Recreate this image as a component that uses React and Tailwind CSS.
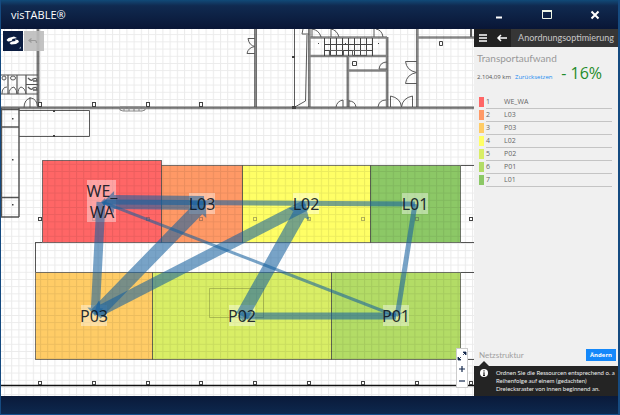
import React, { useState } from 'react';

const resources = [
  { id: 1, name: 'WE_WA', color: '#ff6666' },
  { id: 2, name: 'L03', color: '#ff9966' },
  { id: 3, name: 'P03', color: '#ffcc66' },
  { id: 4, name: 'L02', color: '#ffff66' },
  { id: 5, name: 'P02', color: '#d9ee66' },
  { id: 6, name: 'P01', color: '#b3dc66' },
  { id: 7, name: 'L01', color: '#8cc866' }
];

const areas = [
  { name: 'WE_WA', x: 42, y: 160, w: 119, h: 82, color: '#ff6666' },
  { name: 'L03', x: 161, y: 165, w: 81, h: 77, color: '#ff9966' },
  { name: 'L02', x: 242, y: 165, w: 128, h: 77, color: '#ffff66' },
  { name: 'L01', x: 370, y: 165, w: 90, h: 77, color: '#8cc866' },
  { name: 'P03', x: 35, y: 272, w: 117, h: 87, color: '#ffcc66' },
  { name: 'P02', x: 152, y: 272, w: 179, h: 87, color: '#d9ee66' },
  { name: 'P01', x: 331, y: 272, w: 129, h: 87, color: '#b3dc66' }
];

const labels = [
  { text: 'L03', x: 202, y: 204 },
  { text: 'L02', x: 306, y: 204 },
  { text: 'L01', x: 415, y: 204 },
  { text: 'P03', x: 94, y: 316 },
  { text: 'P02', x: 242, y: 316 },
  { text: 'P01', x: 396, y: 316 }
];

// material flows, width follows the transport intensity
const flows = [
  { from: [204, 203], to: [103, 202], width: 14, head: 11 },
  { from: [415, 204], to: [101, 202], width: 5, head: 4 },
  { from: [101, 202], to: [95, 316], width: 9, head: 8 },
  { from: [96, 314], to: [206, 201], width: 13, head: 12 },
  { from: [306, 205], to: [94, 314], width: 11, head: 10 },
  { from: [242, 316], to: [305, 204], width: 13, head: 12 },
  { from: [396, 316], to: [238, 316], width: 7, head: 6 },
  { from: [396, 316], to: [102, 202], width: 3, head: 4 },
  { from: [415, 204], to: [397, 317], width: 5, head: 5 }
];

const columns = [40, 94, 148, 201, 255, 309, 363, 417, 471];

const flowPoints = ({ from, to, width, head }) => {
  const dx = to[0] - from[0];
  const dy = to[1] - from[1];
  const len = Math.hypot(dx, dy);
  const ux = dx / len;
  const uy = dy / len;
  const at = (along, side) =>
    `${from[0] + ux * along - uy * side},${from[1] + uy * along + ux * side}`;
  const half = width / 2;
  return [
    at(0, half),
    at(len - head, half),
    at(len - head, head),
    at(len, 0),
    at(len - head, -head),
    at(len - head, -half),
    at(0, -half)
  ].join(' ');
};

const Walls = () => (
  <g fill="none" stroke="#5c5c5c" strokeWidth="1">
    <g stroke="#888" strokeWidth="2.4">
      <path d="M1 108H474M38 29V106M255.500 29V108M309.500 29V108M310 37.500H387M310 56H387M348 56V108M348 70.500H387M387 37V108M417.500 29V108M417 37.500H474" />
    </g>
    <path d="M37 29V106M39 29V106M1 107H474M254.500 29V107M256.500 29V107M308.500 29V107M416.500 29V107M388 37V107M347 56V107" stroke="#444" strokeWidth="0.5" />
    <path d="M1 75H38M1 94H38M8 75V94M17 75V94M26 75V94M26 84.500H38" stroke="#555" strokeWidth="1.200" />
    <path d="M2 94q0 -7 5 -7M9 94q0 -6 5 -7q3 3 3 7M18 94q0 -6 3 -7q4 1 5 7M30 97V108M24 108q0 -9 7 -10M38 108q-1 -9 -7 -10" />
    <ellipse cx="4" cy="78" rx="2" ry="2" />
    <ellipse cx="13" cy="78" rx="2.500" ry="2" />
    <path d="M28 78q4 4 5 1q4 -2 4 2h-4M28 87q4 4 5 1q4 -2 4 2h-4" strokeWidth="1.300" />
    <path d="M19 110.500H89.500V136.500H19" />
    <path d="M1.500 108V217M19 108V217M1 109.500H19M1 127H19M1 197.500H19M1 217H19" stroke="#555" strokeWidth="1.400" />
    <path d="M120 107h25v3l-3 1h-19l-3 -1zM124 107v4M129 107v4M134 107v4M139 107v4" stroke="#888" />
    <path d="M255 38.500h-7q1 7 7 8q-7 1 -8 7h8" />
    <path d="M294.500 29V108M307 35L305.500 101L294 107.500M303 29l-1 5h7M312 29v8" />
    <path d="M312 29q7 1 9 8M331 29v8M331 29q6 1 8 8M374 29v8M376 29q6 1 7 8" />
    <path d="M324.500 38V56M330.500 38V56M336.500 38V56M342.500 38V56M348.500 38V56M354.500 38V56M360.500 38V56M366.500 38V56M372.500 38V56M324 44.500H372M324 50.500H372" stroke="#444" />
    <path d="M329.500 50.500h14v5h-14zM352.500 50.500h14v5h-14z" />
    <path d="M352.500 61.500h4v4h-4zM439.500 41.500h3v4h-3z" stroke="#444" />
    <path d="M387 62q-7 0 -8 7h8M343 107v-7q-6 1 -7 7M349 100v7M349 101q6 0 7 6M386 100q-7 0 -8 7" />
    <path d="M390.500 107V96q10 2 11 11M412.500 107V96q-10 2 -11 11" />
    <path d="M417 61.500H405.500q1 9 11 11q-10 2 -11 11H417" />
    <path d="M471 29V37" strokeWidth="2" />
    <path d="M461 165.500H474M461 242.500H474M35.500 242.500H42M35.500 242V272M461 272.500H474M461 359.500H474" stroke="#555" />
    <path d="M1 385.500H474" stroke="#111" strokeWidth="1.500" />
    <g fill="#444" stroke="none">
      <path d="M12 118h1.500v1.500H12zM12 159h1.500v1.500H12zM12 204h1.500v1.500H12zM53 110h2v2h-2zM53 135h2v2h-2zM292 56h3v2h-3zM318 43h1v1h-1zM378 43h1v1h-1zM345 43h1v1h-1zM292 106h4v3h-4z" />
    </g>
  </g>
);

const FloorPlan = () => (
  <svg
    className="block h-full w-full bg-white"
    viewBox="1 29 473 367"
    preserveAspectRatio="xMinYMin slice"
    role="img"
    aria-label="Layout"
  >
    <defs>
      <pattern id="grid" x="40" y="27" width="7.200" height="7.200" patternUnits="userSpaceOnUse">
        <path d="M0 0.500H7.200M0.500 0V7.200" stroke="#000" strokeOpacity="0.080" strokeWidth="1" fill="none" />
      </pattern>
    </defs>
    <Walls />
    {areas.map((area) => (
      <rect
        key={area.name}
        x={area.x + 0.5}
        y={area.y + 0.5}
        width={area.w}
        height={area.h}
        fill={area.color}
        stroke="#444"
        strokeOpacity="0.7"
      />
    ))}
    <rect x="1" y="29" width="700" height="600" fill="url(#grid)" />
    <path d="M209.500 288.500h54v29h-54z" fill="none" stroke="#7d8a3a" strokeOpacity="0.5" />
    <g fill="#fff" stroke="#444" strokeWidth="1">
      {columns.slice(0, 4).map((x) => (
        <rect key={x} x={x - 1.5} y="102.500" width="3" height="4" />
      ))}
      {columns.map((x) => (
        <rect key={x} x={x - 1.5} y="217.500" width="3" height="3" fill="none" opacity={x > 40 && x < 471 ? 0.4 : 1} />
      ))}
      {columns.map((x) => (
        <rect key={x} x={x - 1.5} y="381.500" width="3" height="3" />
      ))}
    </g>
    <g fill="#fff" fillOpacity="0.400">
      <rect x="87" y="180" width="29" height="42" />
      {labels.map((label) => (
        <rect key={label.text} x={label.x - 13} y={label.y - 11} width="26" height="21" />
      ))}
    </g>
    <g fill="#16609f" fillOpacity="0.580">
      {flows.map((flow, i) => (
        <polygon key={i} points={flowPoints(flow)} />
      ))}
    </g>
    <g fontFamily='"Noto Sans", sans-serif' fontSize="16" fill="#0c1420" fillOpacity="0.9" textAnchor="middle">
      <text x="102" y="197">WE_</text>
      <text x="102" y="218">WA</text>
      {labels.map((label) => (
        <text key={label.text} x={label.x} y={label.y + 6}>
          {label.text}
        </text>
      ))}
    </g>
  </svg>
);

const App = () => {
  const [selected, setSelected] = useState(null);

  return (
    <div className="flex min-h-screen flex-col border-r-2 border-l border-[#154a80] bg-[#0a1c3f] font-['Open_Sans','Noto_Sans',sans-serif]">
      <header className="flex h-[29px] shrink-0 items-center bg-linear-to-b from-[#104a78] from-0% via-[#102a50] via-20% to-[#091636] pl-2.5 text-white">
        <h1 className="text-[11px] leading-none">visTABLE®</h1>
        <div className="ml-auto flex items-center gap-7 pr-[13px]">
          <button type="button" aria-label="Minimize" className="flex h-5 w-5 items-center justify-center">
            <svg width="10" height="10" viewBox="0 0 10 10">
              <path d="M2 7.500H8" stroke="#fff" strokeWidth="2" />
            </svg>
          </button>
          <button type="button" aria-label="Maximize" className="flex h-5 w-5 items-center justify-center">
            <svg width="10" height="10" viewBox="0 0 10 10">
              <path d="M0.500 1.500H9.500V8.500H0.500Z" stroke="#eef5e6" strokeWidth="1" fill="none" />
              <path d="M0 1H10" stroke="#eef5e6" strokeWidth="2" />
            </svg>
          </button>
          <button type="button" aria-label="Close" className="flex h-5 w-5 items-center justify-center">
            <svg width="10" height="10" viewBox="0 0 10 10">
              <path d="M1.500 1.500L8.500 8.500M8.500 1.500L1.500 8.500" stroke="#fff" strokeWidth="2" />
            </svg>
          </button>
        </div>
      </header>

      <div className="flex flex-1">
        <main className="relative min-w-0 flex-1">
          <div className="absolute inset-0">
            <FloorPlan />
          </div>
          <div className="absolute top-0.5 left-0.5 flex gap-px">
            <button type="button" aria-label="Move objects" className="h-5 w-5 bg-[#0a1c40]">
              <svg width="20" height="20" viewBox="0 0 20 20">
                <path d="M3.500 9L5.500 7L11 5.500L14 7L9.500 8L8.500 10L5 10.500Z" fill="#fff" />
                <path d="M6.500 12L9 10.500L12.500 10L12 8.500L15 9L16 11L13 13L8 13.500Z" fill="#fff" />
                <path d="M18 15.500v2h-2z" fill="#9ab" />
              </svg>
            </button>
            <button type="button" aria-label="Undo" className="h-5 w-5 bg-[#bdbdbd]/90">
              <svg width="20" height="20" viewBox="0 0 20 20">
                <path d="M5 9.500H11Q12.500 9.500 12.500 12M7.500 7.500L5 9.500L7.500 11.500" fill="none" stroke="#999" strokeWidth="1.200" />
              </svg>
            </button>
          </div>
          <div className="absolute right-1.5 bottom-2 flex w-3 flex-col border border-[#ccc] bg-white">
            <button type="button" aria-label="Fit to view" className="flex h-[13px] items-center justify-center">
              <svg width="10" height="10" viewBox="0 0 10 10">
                <path d="M6 1H9V4ZM1 6V9H4ZM8 2L6 4M2 8L4 6" fill="#14284c" stroke="#14284c" strokeWidth="0.800" />
              </svg>
            </button>
            <button type="button" aria-label="Zoom in" className="flex h-[13px] items-center justify-center">
              <svg width="8" height="8" viewBox="0 0 8 8">
                <path d="M1 4H7M4 1V7" stroke="#14284c" strokeWidth="1.200" />
              </svg>
            </button>
            <button type="button" aria-label="Zoom out" className="flex h-3 items-center justify-center">
              <svg width="8" height="8" viewBox="0 0 8 8">
                <path d="M1 4H7" stroke="#14284c" strokeWidth="1.200" />
              </svg>
            </button>
          </div>
        </main>

        <aside className="flex w-36 shrink-0 flex-col bg-[#f0f0f0]">
          <div className="flex h-[18px] bg-[#363636]">
            <button type="button" aria-label="Menu" className="flex w-[18px] items-center justify-center bg-[#222]">
              <svg width="10" height="10" viewBox="0 0 10 10">
                <path d="M1 2H9M1 5H9M1 8H9" stroke="#fff" strokeWidth="1.400" />
              </svg>
            </button>
            <button type="button" aria-label="Back" className="flex w-[19px] items-center justify-center bg-[#222]">
              <svg width="12" height="10" viewBox="0 0 12 10">
                <path d="M11 5H2M5 2L2 5L5 8" stroke="#fff" strokeWidth="1.500" fill="none" />
              </svg>
            </button>
            <h2 className="flex-1 pr-1 text-right font-['Lato',sans-serif] text-[9px] leading-[18px] whitespace-nowrap text-[#c8c8c8]">
              Anordnungsoptimierung
            </h2>
          </div>

          <section className="pt-1 pr-4 pl-[3px]">
            <h3 className="font-['Lato',sans-serif] text-[10px] leading-[14px] text-[#999]">Transportaufwand</h3>
            <div className="flex h-6 items-center gap-1">
              <span className="text-[6px] whitespace-nowrap text-[#555]">2.104,09 km</span>
              <a href="#reset" className="text-[6px] text-[#1a8cf0]">
                Zurücksetzen
              </a>
              <span className="ml-auto pb-2 text-base leading-none whitespace-nowrap text-[#1f8c2a]">- 16%</span>
            </div>
          </section>

          <table className="mt-[7px] mr-1.5 ml-[5px] border-collapse text-left text-[7px] leading-3 text-[#666]">
            <tbody>
              {resources.map((item) => (
                <tr
                  key={item.id}
                  className={selected === item.id ? 'bg-white' : ''}
                  onClick={() => setSelected(item.id)}
                >
                  <td className="w-[7px] p-0">
                    <div className="h-2.5 w-[5px]" style={{ backgroundColor: item.color }} />
                  </td>
                  <td className="w-[18px] border-b border-[#c4c4c4] p-0">{item.id}</td>
                  <td className="border-b border-[#c4c4c4] p-0">{item.name}</td>
                </tr>
              ))}
            </tbody>
          </table>

          <div className="mt-auto flex items-center justify-between pr-0.5 pb-[5px] pl-[5px]">
            <span className="font-['Lato',sans-serif] text-[8px] leading-3 text-[#a0a0a0]">Netzstruktur</span>
            <button type="button" className="h-3 w-[30px] bg-[#1488fa] text-center text-[6px] leading-3 font-bold text-white">
              Ändern
            </button>
          </div>
          <div className="relative flex gap-2 bg-[#242424] py-[3px] pl-1.5 text-white">
            <svg className="absolute -top-[5px] left-1" width="12" height="6" viewBox="0 0 12 6">
              <path d="M0 6L6 0L12 6Z" fill="#242424" />
            </svg>
            <svg className="shrink-0" width="8" height="8" viewBox="0 0 8 8">
              <circle cx="4" cy="4" r="4" fill="#fff" />
              <path d="M4 1.300V2.500M4 3.200V6.700M3 6.500H5" stroke="#222" strokeWidth="1.200" />
            </svg>
            <p className="font-['Lato',sans-serif] text-[6px] leading-2 whitespace-nowrap text-[#eee]">
              Ordnen Sie die Ressourcen entsprechend o. a
              <br />
              Reihenfolge auf einem (gedachten)
              <br />
              Dreiecksraster von innen beginnend an.
            </p>
          </div>
        </aside>
      </div>

      <footer className="h-[19px] shrink-0 border-b border-[#14508c] bg-linear-to-b from-[#0a1a3a] to-[#0c284e]" />
    </div>
  );
};

export default App;
